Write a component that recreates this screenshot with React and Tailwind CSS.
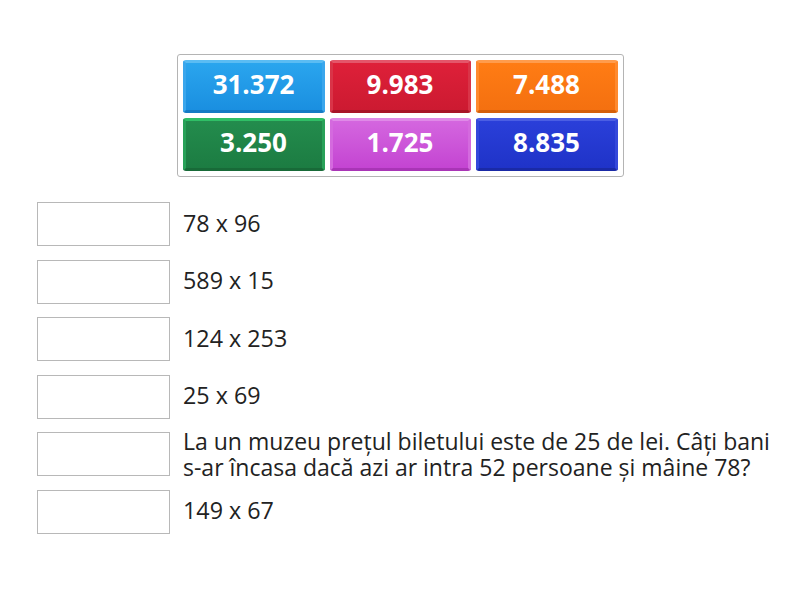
const tiles = [
  { v: "31.372", cls: "bg-gradient-to-b from-[#2aa5ee] to-[#1a8fe0] border-t-[#5bbcf3] border-x-[#3aa6ec] border-b-[#157bc4]" },
  { v: "9.983", cls: "bg-gradient-to-b from-[#de2039] to-[#cc1a31] border-t-[#e4566a] border-x-[#d93448] border-b-[#a81428]" },
  { v: "7.488", cls: "bg-gradient-to-b from-[#ff7c14] to-[#f47010] border-t-[#ff9c4d] border-x-[#ff8a2e] border-b-[#d5600a]" },
  { v: "3.250", cls: "bg-gradient-to-b from-[#238c4d] to-[#1c7c42] border-t-[#2fbf66] border-x-[#28a158] border-b-[#186a38]" },
  { v: "1.725", cls: "bg-gradient-to-b from-[#d466df] to-[#c444d2] border-t-[#df8ae7] border-x-[#d46ade] border-b-[#a935b6]" },
  { v: "8.835", cls: "bg-gradient-to-b from-[#2a3fd9] to-[#1f33c8] border-t-[#4b5ee3] border-x-[#3448db] border-b-[#1a2aa6]" },
];

const rows = [
  "78 x 96",
  "589 x 15",
  "124 x 253",
  "25 x 69",
  "La un muzeu prețul biletului este de 25 de lei. Câți bani s-ar încasa dacă azi ar intra 52 persoane și mâine 78?",
  "149 x 67",
];

export default function App() {
  return (
    <div className="w-[800px] h-[600px] bg-white font-['Open_Sans',sans-serif] text-[#222]">
      <div className="pt-[54px] flex justify-center">
        <div className="border border-[#b4b4b4] rounded-[3px] p-[5px] grid grid-cols-[142px_141px_142px] gap-[5px]">
          {tiles.map((t) => (
            <div
              key={t.v}
              className={`h-[53px] rounded-[3px] border-[3px] flex items-center justify-center pb-[5px] text-white font-bold text-[26px] ${t.cls}`}
            >
              {t.v}
            </div>
          ))}
        </div>
      </div>
      <div className="mt-[25px] ml-[37px] flex flex-col">
        {rows.map((r, i) => (
          <div key={i} className="h-[57.6px] flex items-start">
            <div className="w-[133px] h-[44px] border border-[#b8b8b8] shrink-0" />
            <div className="ml-[13px] h-[44px] w-[608px] flex items-center text-[23.3px] leading-[26px] pb-[3px]">
              <div className={i === 4 ? "mt-[3px] text-[23px]" : ""}>{r}</div>
            </div>
          </div>
        ))}
      </div>
    </div>
  );
}
